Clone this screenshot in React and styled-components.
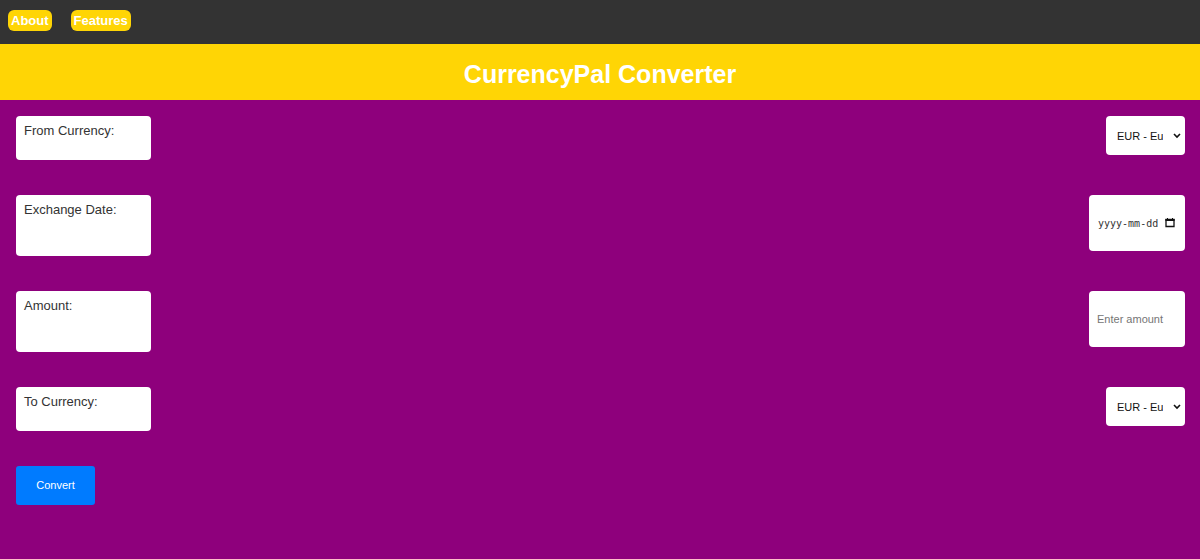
import React, { useState } from 'react';
import styled, { createGlobalStyle } from 'styled-components';

const currencies = ['EUR - Euro', 'USD - US Dollar', 'GBP - British Pound', 'JPY - Japanese Yen'];

export default function App() {
    const [from, setFrom] = useState(currencies[0]);
    const [to, setTo] = useState(currencies[0]);
    const [date, setDate] = useState('');
    const [amount, setAmount] = useState('');

    return (
        <>
            <GlobalStyle />
            <Nav>
                <NavLink href="#about">About</NavLink>
                <NavLink href="#features">Features</NavLink>
            </Nav>
            <Header>
                <h1>CurrencyPal Converter</h1>
            </Header>
            <Form onSubmit={(e) => e.preventDefault()}>
                <Row>
                    <Label htmlFor="from">From Currency:</Label>
                    <CurrencySelect id="from" value={from} onChange={setFrom} />
                </Row>
                <Row>
                    <Label htmlFor="date">Exchange Date:</Label>
                    <DateBox>
                        <DateInput
                            id="date"
                            type="text"
                            placeholder="yyyy-mm-dd"
                            value={date}
                            onChange={(e) => setDate(e.target.value)}
                        />
                        <CalendarButton type="button" aria-label="Show date picker">
                            <svg width="10" height="10" viewBox="0 0 10 10">
                                <path d="M1 1.5h8v7h-8z" fill="none" stroke="#111" strokeWidth="1.3" />
                                <path d="M.4 1h9.2v2h-9.2zM2 0h1v1h-1zM7 0h1v1h-1z" fill="#111" />
                            </svg>
                        </CalendarButton>
                    </DateBox>
                </Row>
                <Row>
                    <Label htmlFor="amount">Amount:</Label>
                    <AmountInput
                        id="amount"
                        type="number"
                        placeholder="Enter amount"
                        value={amount}
                        onChange={(e) => setAmount(e.target.value)}
                    />
                </Row>
                <Row>
                    <Label htmlFor="to">To Currency:</Label>
                    <CurrencySelect id="to" value={to} onChange={setTo} />
                </Row>
                <ConvertButton type="submit">Convert</ConvertButton>
            </Form>
        </>
    )
}

function CurrencySelect({ id, value, onChange }) {
    return (
        <SelectBox>
            <select id={id} value={value} onChange={(e) => onChange(e.target.value)}>
                {currencies.map((currency) => (
                    <option key={currency}>{currency}</option>
                ))}
            </select>
            <svg width="8" height="6" viewBox="0 0 8 6">
                <path d="M1 1l3 3 3-3" fill="none" stroke="#111" strokeWidth="1.6" />
            </svg>
        </SelectBox>
    )
}

const GlobalStyle = createGlobalStyle`
    * {
        box-sizing: border-box;
    }
    body {
        margin: 0;
        background: #8e007c;
        color: #333;
        font-family: Arial, "Liberation Sans", sans-serif;
    }
    input, select, button {
        font-family: inherit;
        font-size: 11px;
    }
`;
const Nav = styled.nav`
    display: flex;
    align-items: flex-start;
    gap: 19px;
    padding: 10px 8px 13px;
    background: #333;
`;
const NavLink = styled.a`
    padding: 3px;
    border-radius: 6px;
    background: #ffd505;
    color: white;
    font-size: 13px;
    font-weight: bold;
    line-height: 15px;
    text-decoration: none;
`;
const Header = styled.header`
    padding: 15px 13px 11px;
    background: #ffd505;
    color: white;
    text-align: center;
    h1{
        margin: 0;
        font-size: 25px;
        line-height: 30px;
    }
`;
const Form = styled.form`
    display: flex;
    flex-direction: column;
    gap: 35px;
    padding: 16px 15px 16px 16px;
`;
const Row = styled.div`
    display: flex;
    justify-content: space-between;
    > :last-child{
        margin-bottom: 5px;
    }
`;
const Label = styled.label`
    width: 135px;
    padding: 7px 8px;
    border-radius: 4px;
    background: white;
    font-size: 13px;
    line-height: 15px;
`;
const SelectBox = styled.div`
    position: relative;
    width: 79px;
    height: 39px;
    select{
        appearance: none;
        width: 100%;
        height: 100%;
        padding: 0 22px 0 11px;
        border: 0;
        border-radius: 4px;
        background: white;
        color: #111;
    }
    svg{
        position: absolute;
        top: 17px;
        right: 4px;
        pointer-events: none;
    }
`;
const DateBox = styled.div`
    display: flex;
    align-items: center;
    width: 96px;
    height: 56px;
    padding: 0 10px 0 9px;
    border-radius: 4px;
    background: white;
`;
const DateInput = styled.input`
    flex: 1;
    min-width: 0;
    padding: 0;
    border: 0;
    background: transparent;
    font-family: "DejaVu Sans Mono", monospace;
    font-size: 10px;
    &::placeholder{
        color: #333;
    }
`;
const CalendarButton = styled.button`
    display: flex;
    padding: 0;
    border: 0;
    background: transparent;
`;
const AmountInput = styled.input`
    width: 96px;
    height: 56px;
    padding: 0 8px;
    border: 0;
    border-radius: 4px;
    background: white;
    appearance: textfield;
    &::-webkit-inner-spin-button{
        display: none;
    }
    &::placeholder{
        color: #757575;
    }
`;
const ConvertButton = styled.button`
    align-self: flex-start;
    width: 79px;
    height: 39px;
    padding: 0 6px 2px;
    border: 0;
    border-radius: 3px;
    background: #007bff;
    color: white;
`;
